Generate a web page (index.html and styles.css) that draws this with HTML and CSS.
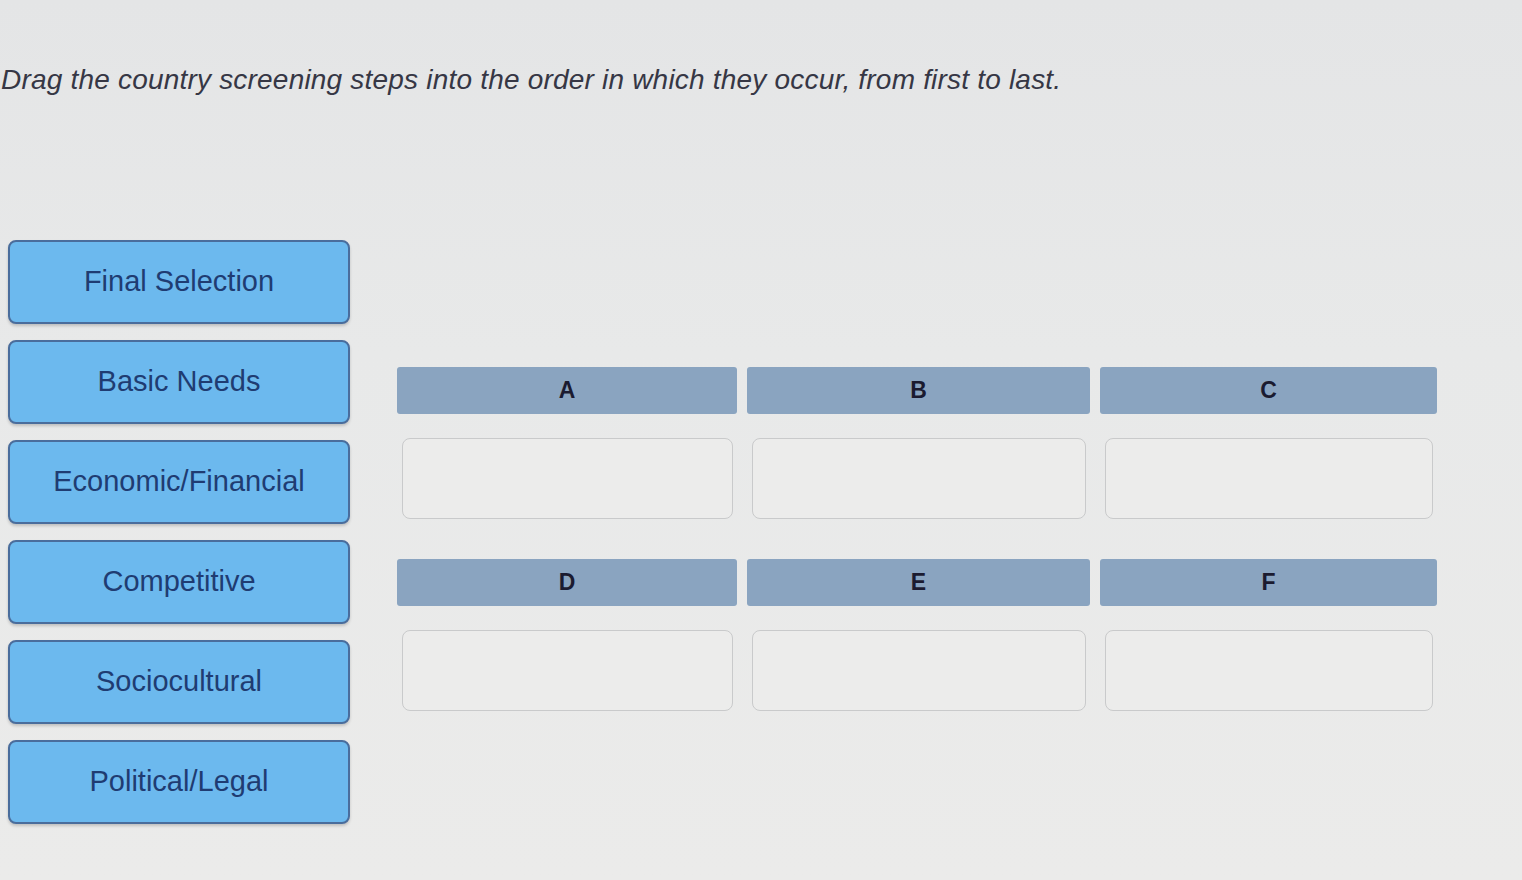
FILE: index.html
```html
<!DOCTYPE html>
<html>
<head>
<meta charset="utf-8">
<link rel="stylesheet" href="styles.css">
</head>
<body>
<p class="prompt">Drag the country screening steps into the order in which they occur, from first to last.</p>
<div class="workspace">
  <div class="choices">
    <div class="chip">Final Selection</div>
    <div class="chip">Basic Needs</div>
    <div class="chip">Economic/Financial</div>
    <div class="chip">Competitive</div>
    <div class="chip">Sociocultural</div>
    <div class="chip">Political/Legal</div>
  </div>
  <div class="targets">
    <div class="row">
      <div class="slot"><div class="label">A</div><div class="drop"></div></div>
      <div class="slot"><div class="label">B</div><div class="drop"></div></div>
      <div class="slot"><div class="label">C</div><div class="drop"></div></div>
    </div>
    <div class="row">
      <div class="slot"><div class="label">D</div><div class="drop"></div></div>
      <div class="slot"><div class="label">E</div><div class="drop"></div></div>
      <div class="slot"><div class="label">F</div><div class="drop"></div></div>
    </div>
  </div>
</div>
</body>
</html>
```

FILE: styles.css
```css
html, body {
  margin: 0;
  padding: 0;
}
body {
  width: 1522px;
  height: 880px;
  overflow: hidden;
  background: linear-gradient(180deg, #e4e5e6 0%, #e8e9e9 40%, #ebebea 100%);
  font-family: "Liberation Sans", Arial, sans-serif;
}
.prompt {
  margin: 0;
  padding: 63px 0 0 1px;
  font-style: italic;
  font-size: 28px;
  line-height: 34px;
  color: #363745;
  letter-spacing: 0.2px;
}
.workspace {
  display: flex;
  padding: 143px 0 0 8px;
}
.choices {
  display: flex;
  flex-direction: column;
  gap: 16px;
  width: 342px;
}
.chip {
  box-sizing: border-box;
  height: 84px;
  display: flex;
  align-items: center;
  justify-content: center;
  background: #6cb9ee;
  border: 2px solid #4a6d9c;
  border-radius: 8px;
  box-shadow: 0 2px 3px rgba(0,0,0,0.18);
  color: #1f3c72;
  font-size: 29px;
  padding-bottom: 2px;
}
.targets {
  margin-left: 47px;
  padding-top: 127px;
  display: flex;
  flex-direction: column;
  gap: 40px;
}
.row {
  display: grid;
  grid-template-columns: 340px 343px 337px;
  column-gap: 10px;
}
.slot {
  display: flex;
  flex-direction: column;
}
.label {
  height: 47px;
  display: flex;
  align-items: center;
  justify-content: center;
  background: #8aa4c0;
  border-radius: 3px;
  color: #1b1b30;
  font-weight: bold;
  font-size: 23px;
}
.drop {
  margin: 24px 4px 0 5px;
  height: 81px;
  box-sizing: border-box;
  border: 1px solid #c9cacb;
  border-radius: 8px;
  background: #ececeb;
}
```
